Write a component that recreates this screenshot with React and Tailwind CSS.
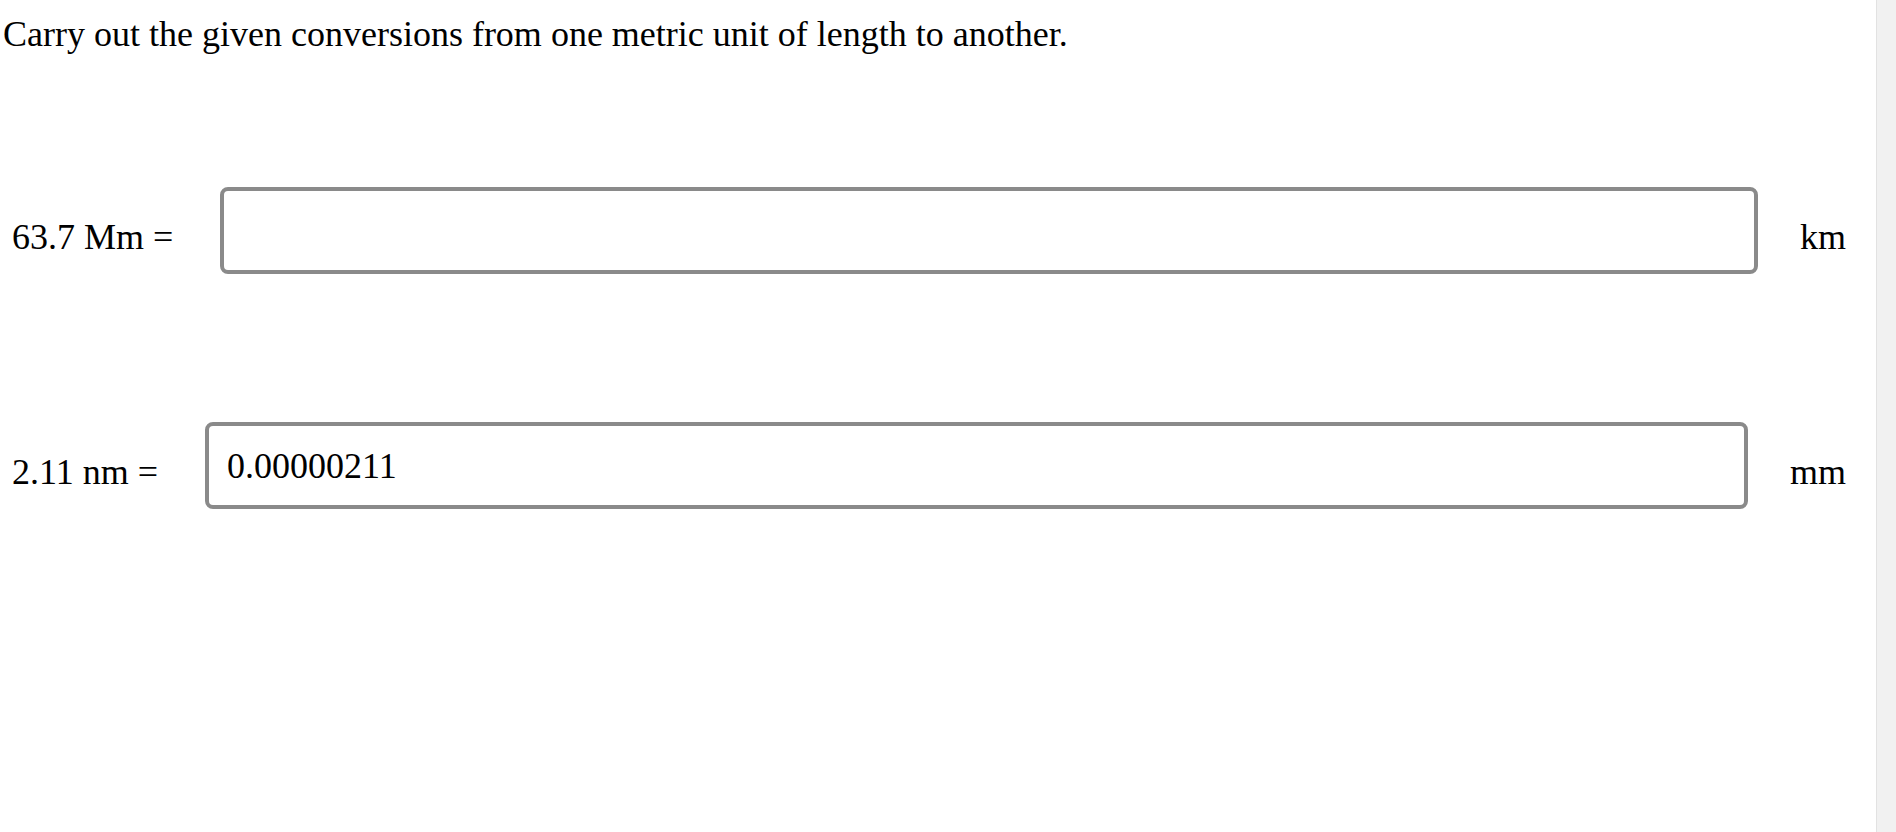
import React from 'react';

const rows = [
    { label: '63.7 Mm =', value: '', unit: 'km', top: 'mt-[133px]' },
    { label: '2.11 nm =', value: '0.00000211', unit: 'mm', top: 'mt-[148px]' },
];

function ConversionRow({ row }) {
    return (
        <div className={`flex items-center pl-[12px] pr-[30px] ${row.top}`}>
            <span className="whitespace-pre pt-[13px]">{row.label}</span>
            <input
                type="text"
                readOnly
                value={row.value}
                className="ml-[47px] flex-1 h-[87px] min-w-0 border-4 border-[#8a8a8a] rounded-[8px] px-[18px] bg-white outline-none text-[36px] text-black"
                style={{ fontFamily: '"Liberation Serif", "Times New Roman", serif' }}
            />
            <span className="ml-[42px] whitespace-pre pt-[13px]">{row.unit}</span>
        </div>
    );
}

export default function App() {
    return (
        <div
            className="flex min-h-screen bg-white text-black text-[36px] leading-[40px]"
            style={{ fontFamily: '"Liberation Serif", "Times New Roman", serif' }}
        >
            <div className="flex-1 min-w-0">
                <p className="pt-[14px] pl-[3px]">
                    Carry out the given conversions from one metric unit of length to another.
                </p>
                {rows.map((row, i) => (
                    <ConversionRow key={i} row={row} />
                ))}
            </div>
            <div className="w-[20px] shrink-0 bg-[#f1f1f1] border-l border-[#e2e2e2]"></div>
        </div>
    );
}
